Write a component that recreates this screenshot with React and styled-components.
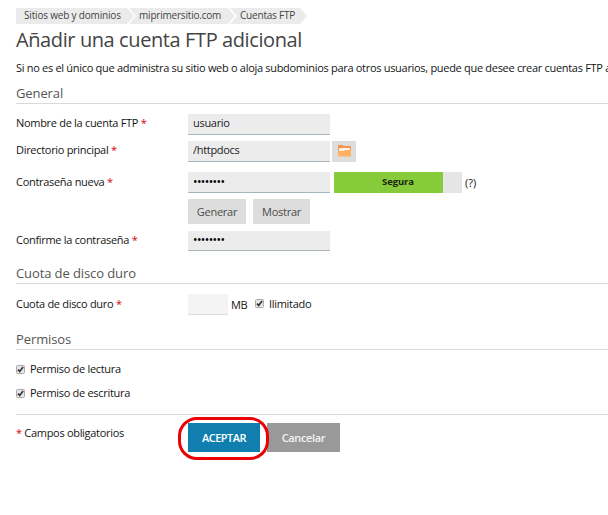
import React from "react"
import styled, { createGlobalStyle } from "styled-components"

const GlobalStyle = createGlobalStyle`
  * {
    box-sizing: border-box;
  }

  body {
    margin: 0;
    background-color: #fff;
    color: #151515;
    font-family: "Open Sans", "Noto Sans", sans-serif;
    font-size: 11px;
    letter-spacing: -0.3px;
    line-height: 16px;
    overflow: hidden;
  }
`

const Page = styled.main`
  padding: 8px 0 0 16px;
  height: 515px;
  overflow: hidden;
`

const Breadcrumbs = styled.nav`
  display: flex;
  height: 16px;
`

const Crumb = styled.a`
  width: ${(props) => props.$width}px;
  margin-right: -5px;
  padding-left: ${(props) => (props.$first ? 8 : 10)}px;
  background-color: #ebebeb;
  color: #444;
  font-size: 10px;
  letter-spacing: ${(props) => props.$spacing}px;
  line-height: 15px;
  white-space: nowrap;
  clip-path: polygon(
    0 0,
    calc(100% - 7px) 0,
    100% 50%,
    calc(100% - 7px) 100%,
    0 100%,
    ${(props) => (props.$first ? "0" : "7px")} 50%
  );
`

const Title = styled.h1`
  margin: 2px 0 0;
  height: 28px;
  color: #444;
  font-size: 20px;
  font-weight: 400;
  letter-spacing: -0.4px;
  line-height: 28px;
`

const Description = styled.p`
  margin: 6px 0 0;
  height: 16px;
  white-space: nowrap;
`

const Heading = styled.h2`
  margin: ${(props) => props.$top}px 0 0;
  height: 20px;
  border-bottom: 1px solid #d9d9d9;
  color: #555;
  font-size: 13px;
  font-weight: 400;
  letter-spacing: -0.1px;
  line-height: 18px;
`

const Row = styled.div`
  display: flex;
  height: ${(props) => props.$height || 21}px;
  margin-top: ${(props) => props.$top}px;
`

const Label = styled.label`
  width: 172px;
  flex: none;
  line-height: ${(props) => props.$line || 18}px;
`

const Required = styled.span`
  color: #d8000c;
`

const Input = styled.input`
  width: ${(props) => props.$width || 142}px;
  height: 100%;
  padding: 0 5px 3px;
  border: 0;
  border-bottom: 1px solid ${(props) => (props.disabled ? "#dedede" : "#a8b5bd")};
  border-radius: 0;
  outline: 0;
  background-color: ${(props) => (props.disabled ? "#f3f3f3" : "#ececec")};
  color: #222;
  font: inherit;
  letter-spacing: inherit;

  &[type="password"] {
    padding-bottom: ${(props) => (props.$low ? 1 : 2)}px;
    color: #000;
    font-size: 12px;
    letter-spacing: -0.6px;
  }
`

const BrowseButton = styled.button`
  display: flex;
  align-items: center;
  justify-content: center;
  width: 24px;
  margin-left: 2px;
  padding: 0 0 1px 1px;
  border: 0;
  background-color: #ddd;
`

const Strength = styled.div`
  width: 128px;
  margin-left: 4px;
  background: linear-gradient(to right, #86cb39 109px, #e5e5e5 109px);
  color: #1c2410;
  font-size: 9.5px;
  font-weight: 700;
  letter-spacing: -0.1px;
  line-height: 20px;
  text-align: center;
`

const Hint = styled.span`
  margin-left: 3px;
  letter-spacing: 0;
  line-height: 22px;
`

const SmallButton = styled.button`
  width: ${(props) => props.$width}px;
  margin-right: 7px;
  padding: 0;
  border: 0;
  background-color: #ddd;
  color: #4c4c4c;
  font: inherit;
  letter-spacing: -0.25px;
  line-height: 25px;
`

const Unit = styled.span`
  width: 24px;
  margin-left: 3px;
  line-height: 22px;
`

const CheckLabel = styled.label`
  display: flex;
  gap: 5px;
  height: 19px;
  line-height: ${(props) => props.$line || 18}px;
`

const CheckBox = styled.svg`
  display: block;
  flex: none;
  margin-top: 5px;
`

const Footer = styled.footer`
  display: flex;
  margin-top: 10px;
  padding-top: 8px;
  border-top: 1px solid #d9d9d9;
`

const Note = styled.div`
  width: 172px;
  line-height: 20px;
`

const ActionButton = styled.button`
  position: relative;
  z-index: ${(props) => (props.$primary ? 1 : 0)};
  width: ${(props) => props.$width}px;
  height: 29px;
  margin-right: 7px;
  padding: 0;
  border: 0;
  background-color: ${(props) => (props.$primary ? "#107fb0" : "#999")};
  color: ${(props) => (props.$primary ? "#fff" : "#f2f2f2")};
  font: inherit;
  font-weight: 600;
  letter-spacing: ${(props) => (props.$primary ? -0.5 : -0.35)}px;
  line-height: 29px;
`

const Ring = styled.span`
  position: absolute;
  top: -6px;
  left: -10px;
  width: 91px;
  height: 43px;
  border: 3px solid #eb0006;
  border-radius: 19px;
  pointer-events: none;
`

const FolderIcon = () => (
  <svg width="13" height="12" viewBox="0 0 13 12">
    <path d="M0 0H4.5L5.5 1H13V11H0Z" fill="#fa914f" />
    <path d="M1 3H12V7H1Z" fill="#fff4e8" />
    <path d="M0 6H5.5L7 5H13V10.5Q13 11.5 12 11.5H1Q0 11.5 0 10.5Z" fill="#ffb062" />
  </svg>
)

const Check = () => (
  <CheckBox width="9" height="9" viewBox="0 0 9 9">
    <rect x="0.5" y="0.5" width="8" height="8" rx="1" fill="#e6e6e6" stroke="#aaa" />
    <path d="M2 4.6L3.7 6.4L7.1 2" fill="none" stroke="#333" strokeWidth="1.7" />
  </CheckBox>
)

const FieldLabel = ({ children, line }) => (
  <Label $line={line}>
    {children} <Required>*</Required>
  </Label>
)

const App = () => {
  return (
    <>
      <GlobalStyle />
      <Page>
        <Breadcrumbs>
          <Crumb $first $width={118} $spacing={-0.18}>
            Sitios web y dominios
          </Crumb>
          <Crumb $width={106} $spacing={-0.2}>
            miprimersitio.com
          </Crumb>
          <Crumb $width={77} $spacing={-0.2}>
            Cuentas FTP
          </Crumb>
        </Breadcrumbs>
        <Title>Añadir una cuenta FTP adicional</Title>
        <Description>
          Si no es el único que administra su sitio web o aloja subdominios para
          otros usuarios, puede que desee crear cuentas FTP adicionales.
        </Description>

        <Heading $top={8}>General</Heading>
        <Row $top={10}>
          <FieldLabel>Nombre de la cuenta FTP</FieldLabel>
          <Input defaultValue="usuario" />
        </Row>
        <Row $top={6}>
          <FieldLabel>Directorio principal</FieldLabel>
          <Input defaultValue="/httpdocs" />
          <BrowseButton>
            <FolderIcon />
          </BrowseButton>
        </Row>
        <Row $top={10}>
          <FieldLabel line={20}>Contraseña nueva</FieldLabel>
          <Input type="password" $low defaultValue="usuario1" />
          <Strength>Segura</Strength>
          <Hint>(?)</Hint>
        </Row>
        <Row $top={6} $height={25}>
          <Label />
          <SmallButton $width={58}>Generar</SmallButton>
          <SmallButton $width={57}>Mostrar</SmallButton>
        </Row>
        <Row $top={7} $height={20}>
          <FieldLabel>Confirme la contraseña</FieldLabel>
          <Input type="password" defaultValue="usuario1" />
        </Row>

        <Heading $top={13}>Cuota de disco duro</Heading>
        <Row $top={10}>
          <FieldLabel line={20}>Cuota de disco duro</FieldLabel>
          <Input $width={40} disabled />
          <Unit>MB</Unit>
          <CheckLabel $line={20}>
            <Check />
            Ilimitado
          </CheckLabel>
        </Row>

        <Heading $top={15}>Permisos</Heading>
        <Row $top={10} $height={20}>
          <CheckLabel>
            <Check />
            Permiso de lectura
          </CheckLabel>
        </Row>
        <Row $top={4} $height={20}>
          <CheckLabel>
            <Check />
            Permiso de escritura
          </CheckLabel>
        </Row>

        <Footer>
          <Note>
            <Required>*</Required> Campos obligatorios
          </Note>
          <ActionButton $primary $width={72}>
            ACEPTAR
            <Ring />
          </ActionButton>
          <ActionButton $width={73}>Cancelar</ActionButton>
        </Footer>
      </Page>
    </>
  )
}

export default App
